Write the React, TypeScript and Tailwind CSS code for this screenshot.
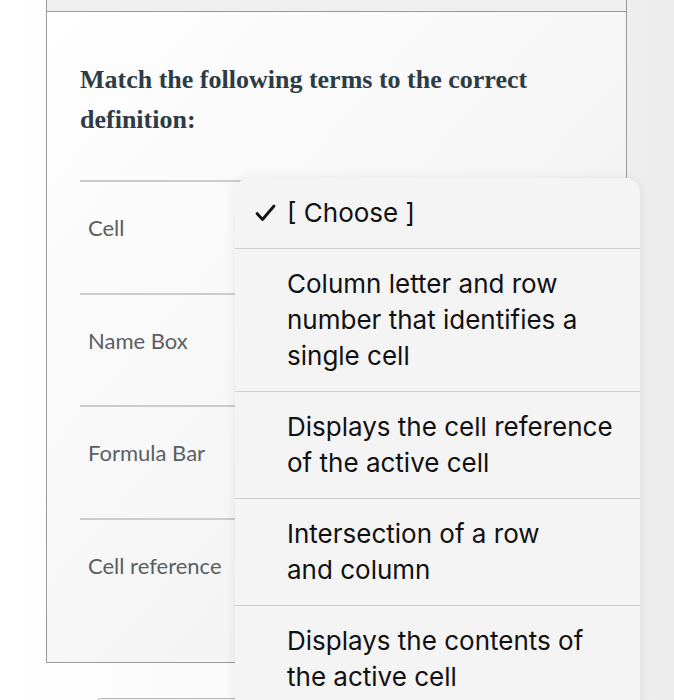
import React from "react";

const terms = ["Cell", "Name Box", "Formula Bar", "Cell reference"];

const options = [
  ["Column letter and row", "number that identifies a", "single cell"],
  ["Displays the cell reference", "of the active cell"],
  ["Intersection of a row", "and column"],
  ["Displays the contents of", "the active cell"],
];

export default function App() {
  return (
    <div className="relative h-[700px] w-[674px] overflow-hidden bg-gradient-to-r from-white via-[#f8f8f8] to-[#ededed]">
      <div className="ml-[46px] w-[581px] border-x border-b border-[#9a9a9a]">
        <div className="h-[12px] border-b border-[#9a9a9a] bg-[#efefef]" />
        <div className="bg-gradient-to-br from-white to-[#eeeeee] pl-[33px] pr-[32px] pt-[48px] pb-[32px]">
          <h2 className="font-['Liberation_Serif',serif] text-[26px] font-bold leading-[40px] text-[#2d3b45]">
            Match the following terms to the correct definition:
          </h2>
          <div className="mt-[40px]">
            {terms.map((t) => (
              <div
                key={t}
                className="h-[112.5px] border-t-2 border-[#c9cdd1] pl-[8px] pt-[32px] font-['Lato',sans-serif] text-[22px] font-normal leading-[28px] text-[#5a5f63]"
              >
                {t}
              </div>
            ))}
          </div>
        </div>
      </div>
      <div className="ml-[95px] mt-[35px] h-[40px] w-[180px] rounded-[6px] border border-[#b8b8b8] bg-[#f5f5f5]" />

      <div className="absolute left-[235px] top-[178px] w-[405px] overflow-hidden rounded-t-[14px] bg-[#f4f4f4] font-['Inter',sans-serif] text-[26px] leading-[36px] text-[#111] shadow-[0_0_12px_rgba(0,0,0,0.08)]">
        <div className="flex h-[70px] items-center">
          <span className="flex w-[52px] justify-start pl-[20px]">
            <svg width="21" height="18" viewBox="0 0 21 18" fill="none">
              <path d="M2 9.5 L7.5 15.5 L19 2" stroke="#111" strokeWidth="2.8" strokeLinecap="round" strokeLinejoin="round" />
            </svg>
          </span>
          <span>[ Choose ]</span>
        </div>
        {options.map((o, i) => (
          <div key={i} className="border-t border-[#cfcfcf] pl-[52px] pt-[17px] pb-[17px]">
            {o.map((line) => (
              <div key={line}>{line}</div>
            ))}
          </div>
        ))}
      </div>
    </div>
  );
}
